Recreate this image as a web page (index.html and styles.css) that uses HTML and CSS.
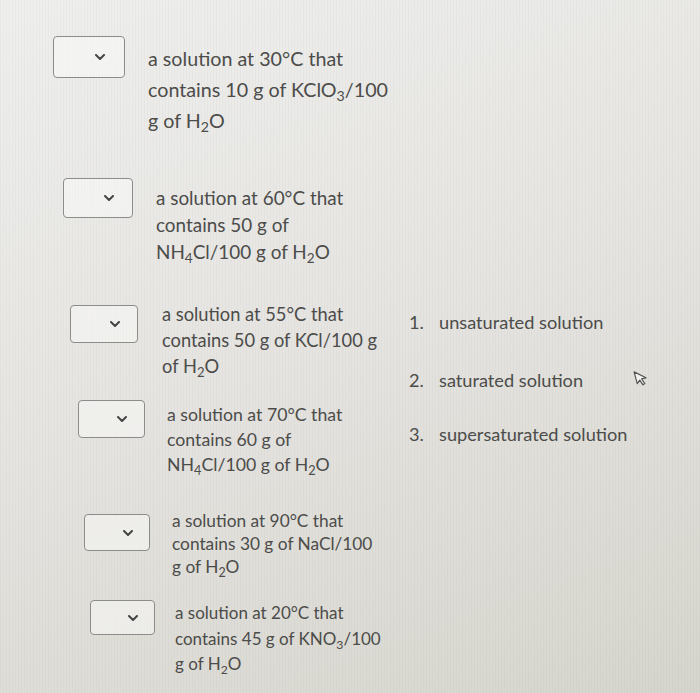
FILE: index.html
```html
<!DOCTYPE html>
<html lang="en">
<head>
    <meta charset="UTF-8">
    <meta name="viewport" content="width=device-width, initial-scale=1.0">
    <title>Matching: solutions</title>
    <link rel="stylesheet" href="styles.css">
</head>
<body>
    <div class="page">
        <div class="questions">
            <div class="row r1">
                <div class="select"><svg class="chevron" viewBox="0 0 10 6"><polyline points="1,1 5,5 9,1"/></svg></div>
                <div class="prompt">
                    <span class="line">a solution at 30&deg;C that</span>
                    <span class="line">contains 10 g of KClO<sub>3</sub>/100</span>
                    <span class="line">g of H<sub>2</sub>O</span>
                </div>
            </div>
            <div class="row r2">
                <div class="select"><svg class="chevron" viewBox="0 0 10 6"><polyline points="1,1 5,5 9,1"/></svg></div>
                <div class="prompt">
                    <span class="line">a solution at 60&deg;C that</span>
                    <span class="line">contains 50 g of</span>
                    <span class="line">NH<sub>4</sub>Cl/100 g of H<sub>2</sub>O</span>
                </div>
            </div>
            <div class="row r3">
                <div class="select"><svg class="chevron" viewBox="0 0 10 6"><polyline points="1,1 5,5 9,1"/></svg></div>
                <div class="prompt">
                    <span class="line">a solution at 55&deg;C that</span>
                    <span class="line">contains 50 g of KCl/100 g</span>
                    <span class="line">of H<sub>2</sub>O</span>
                </div>
            </div>
            <div class="row r4">
                <div class="select"><svg class="chevron" viewBox="0 0 10 6"><polyline points="1,1 5,5 9,1"/></svg></div>
                <div class="prompt">
                    <span class="line">a solution at 70&deg;C that</span>
                    <span class="line">contains 60 g of</span>
                    <span class="line">NH<sub>4</sub>Cl/100 g of H<sub>2</sub>O</span>
                </div>
            </div>
            <div class="row r5">
                <div class="select"><svg class="chevron" viewBox="0 0 10 6"><polyline points="1,1 5,5 9,1"/></svg></div>
                <div class="prompt">
                    <span class="line">a solution at 90&deg;C that</span>
                    <span class="line">contains 30 g of NaCl/100</span>
                    <span class="line">g of H<sub>2</sub>O</span>
                </div>
            </div>
            <div class="row r6">
                <div class="select"><svg class="chevron" viewBox="0 0 10 6"><polyline points="1,1 5,5 9,1"/></svg></div>
                <div class="prompt">
                    <span class="line">a solution at 20&deg;C that</span>
                    <span class="line">contains 45 g of KNO<sub>3</sub>/100</span>
                    <span class="line">g of H<sub>2</sub>O</span>
                </div>
            </div>
        </div>

        <div class="answers">
            <div class="answer a1"><span class="num">1.</span><span>unsaturated solution</span></div>
            <div class="answer a2">
                <span class="num">2.</span><span>saturated solution</span>
                <svg class="cursor" width="16" height="18" viewBox="0 0 16 18">
                    <path d="M2 2 L3.5 14 L6.5 11 L9 16 L11 15 L8.5 10 L13 9.5 Z" fill="#f2f2ef" stroke="#555" stroke-width="1.2" stroke-linejoin="round"/>
                </svg>
            </div>
            <div class="answer a3"><span class="num">3.</span><span>supersaturated solution</span></div>
        </div>
    </div>
</body>
</html>
```

FILE: styles.css
```css
body {
    margin: 0;
    font-family: Lato, "Open Sans", sans-serif;
    color: #4c4c4a;
    background-color: #e4e3df;
    background-image:
        repeating-linear-gradient(90deg, rgba(0,0,0,0.025) 0 1px, transparent 1px 3px),
        linear-gradient(160deg, #efefed 0%, #e6e5e2 45%, #d6d5cd 100%);
    min-height: 693px;
    overflow: hidden;
}
.page {
    display: flex;
    width: 700px;
    height: 693px;
}
.questions {
    flex: none;
    width: 409px;
    display: flex;
    flex-direction: column;
}
.row {
    display: flex;
    align-items: flex-start;
}
.select {
    flex: none;
    display: flex;
    align-items: center;
    justify-content: flex-end;
    box-sizing: border-box;
    border: 1.5px solid #8c8c8a;
    border-radius: 4px;
    background: rgba(250,250,248,0.55);
}
.chevron {
    width: 10px;
    height: 6px;
    fill: none;
    stroke: #454545;
    stroke-width: 2;
    stroke-linecap: round;
    stroke-linejoin: round;
}
.line {
    display: block;
    white-space: nowrap;
}
sub {
    font-size: 0.72em;
    line-height: 0;
    vertical-align: -0.3em;
}

/* each row sits a little further right and smaller going down */
.r1 { margin-top: 36px; padding-left: 53px; font-size: 19.7px; line-height: 31px; }
.r1 .select { width: 72px; height: 42px; padding-right: 19px; }
.r1 .prompt { margin: 7px 0 0 23px; }

.r2 { margin-top: 42px; padding-left: 63px; font-size: 18.9px; line-height: 27px; }
.r2 .select { width: 70px; height: 40px; padding-right: 18px; }
.r2 .prompt { margin: 6px 0 0 23px; }

.r3 { margin-top: 36px; padding-left: 70px; font-size: 18.3px; line-height: 26px; }
.r3 .select { width: 68px; height: 38px; padding-right: 17px; margin-top: 4px; }
.r3 .prompt { margin-left: 24px; }

.r4 { margin-top: 21px; padding-left: 78px; font-size: 17.7px; line-height: 25px; }
.r4 .select { width: 67px; height: 38px; padding-right: 17px; }
.r4 .prompt { margin: 2px 0 0 22px; }

.r5 { margin-top: 32px; padding-left: 84px; font-size: 17.3px; line-height: 23px; }
.r5 .select { width: 66px; height: 37px; padding-right: 16px; margin-top: 5px; }
.r5 .prompt { margin-left: 22px; }

.r6 { margin-top: 22px; padding-left: 90px; font-size: 17px; line-height: 25.5px; }
.r6 .select { width: 65px; height: 35px; padding-right: 16px; }
.r6 .prompt { margin-left: 20px; }

.answers {
    flex: none;
    padding-top: 311px;
    font-size: 18.2px;
    line-height: 22px;
}
.answer {
    display: flex;
    align-items: center;
    position: relative;
}
.num {
    width: 30px;
}
.a2 { margin-top: 36px; }
.a3 { margin-top: 32px; }
.cursor {
    position: absolute;
    left: 224px;
    top: 0;
    transform: rotate(-8deg);
}
```
